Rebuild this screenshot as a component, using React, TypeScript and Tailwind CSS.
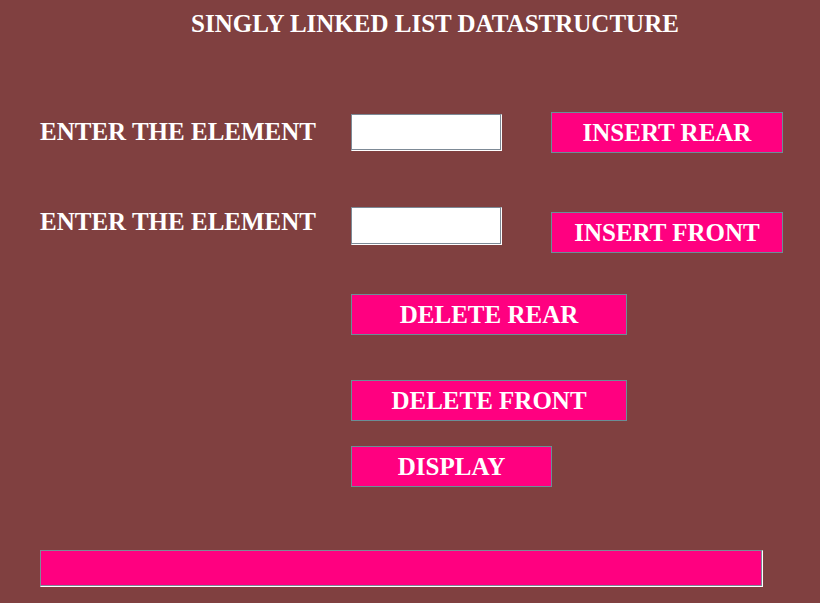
import React from "react";

const btn =
  "flex items-center justify-center bg-[#ff0080] border border-[#6b8e96] text-[25px] leading-none text-white font-bold pb-[1px]";

const inset =
  "border-t border-l border-t-[#7d8a96] border-l-[#7d8a96] border-b border-r border-b-white border-r-white";

export default function App() {
  return (
    <div className="min-h-screen w-full bg-[#804040] text-white font-bold overflow-hidden" style={{ fontFamily: '"Liberation Serif", "Times New Roman", serif' }}>
      <h1 className="pl-[191px] pt-[11px] text-[25px] leading-none font-bold whitespace-nowrap">
        SINGLY LINKED LIST DATASTRUCTURE
      </h1>

      <div className="mt-[76px] flex items-start">
        <div className="ml-[40px] mt-[7px] w-[311px] text-[25px] leading-none whitespace-nowrap">ENTER THE ELEMENT</div>
        <div className={`mt-[2px] w-[151px] h-[37px] bg-white ${inset}`}>
          <input className="w-full h-full border-b border-r border-b-[#7d8a96] border-r-[#7d8a96] bg-white outline-none" />
        </div>
        <button className={`ml-[49px] w-[232px] h-[41px] ${btn}`}>INSERT REAR</button>
      </div>

      <div className="mt-[54px] flex items-start">
        <div className="ml-[40px] mt-[2px] w-[311px] text-[25px] leading-none whitespace-nowrap">ENTER THE ELEMENT</div>
        <div className={`w-[151px] h-[38px] bg-white ${inset}`}>
          <input className="w-full h-full border-b border-r border-b-[#7d8a96] border-r-[#7d8a96] bg-white outline-none" />
        </div>
        <button className={`ml-[49px] mt-[5px] w-[232px] h-[41px] ${btn}`}>INSERT FRONT</button>
      </div>

      <button className={`mt-[41px] ml-[351px] w-[276px] h-[41px] ${btn}`}>DELETE REAR</button>
      <button className={`mt-[45px] ml-[351px] w-[276px] h-[41px] ${btn}`}>DELETE FRONT</button>
      <button className={`mt-[25px] ml-[351px] w-[201px] h-[41px] ${btn}`}>DISPLAY</button>

      <div className={`mt-[63px] ml-[40px] w-[723px] h-[37px] ${inset}`}>
        <div className="w-full h-full bg-[#ff0080] border-b border-r border-b-[#7d8a96] border-r-[#7d8a96]" />
      </div>
    </div>
  );
}
